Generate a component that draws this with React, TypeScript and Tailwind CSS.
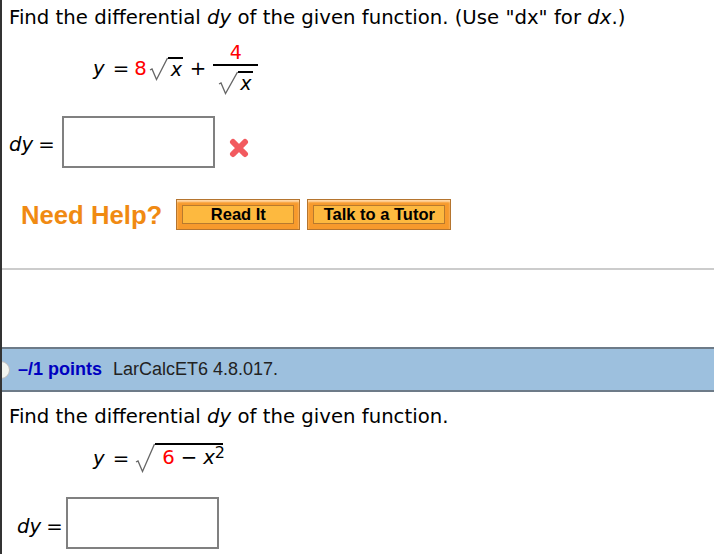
import React from 'react';

const RootSign = ({ width, height }: { width: number; height: number }) => (
  <svg width={width} height={height} viewBox={`0 0 ${width} ${height}`} className="block shrink-0" fill="none">
    <path d={`M1 ${height - 11} L3 ${height - 12} L7.5 ${height - 1.5} L${width - 0.5} 1`} stroke="#666" strokeWidth="1.3" />
  </svg>
);

const Radical = ({ children, signWidth, signHeight }: { children: React.ReactNode; signWidth: number; signHeight: number }) => (
  <span className="flex items-end">
    <RootSign width={signWidth} height={signHeight} />
    <span className="block border-t-2 border-black leading-none">{children}</span>
  </span>
);

const AnswerBox = ({ className }: { className: string }) => (
  <div className={`h-[52px] border-2 border-[#808080] bg-white ${className}`} />
);

const HelpButton = ({ label, className }: { label: string; className: string }) => (
  <button className={`flex h-[31px] items-center justify-center border border-[#b5752f] bg-[#f79a2c] p-[5px] shadow-[inset_0_2px_2px_#ffd9a8] ${className}`}>
    <span className="flex h-full w-full items-center justify-center border border-[#b87a2e] bg-[#fdb93f] text-[16.5px] font-bold text-black">{label}</span>
  </button>
);

export default function App() {
  return (
    <div className="h-[554px] w-[714px] overflow-hidden border-l-2 border-[#333] bg-white font-['DejaVu_Sans',sans-serif] text-[19.7px] text-black">
      <section className="h-[270px] border-b-2 border-[#ccc]">
        <p className="pl-[7px] pt-[5px] leading-[26px] whitespace-nowrap">
          Find the differential <i>dy</i> of the given function. (Use "dx" for <i>dx</i>.)
        </p>

        <div className="ml-[91px] mt-[11px] flex h-[58px] items-start">
          <i className="mt-[14px] leading-[26px]">y</i>
          <span className="ml-[8px] mt-[14px] leading-[26px]">=</span>
          <span className="ml-[5px] mt-[14px] leading-[26px] text-[#f00]">8</span>
          <div className="ml-[2px] mt-[15px]">
            <Radical signWidth={19} signHeight={24}>
              <i className="block h-[22px] w-[15px] pl-[3px] text-[19px] leading-[21px]">x</i>
            </Radical>
          </div>
          <span className="ml-[7px] mt-[14px] leading-[26px]">+</span>
          <div className="ml-[7px] flex w-[45px] flex-col items-center">
            <span className="h-[20px] text-[19px] leading-[20px] text-[#f00]">4</span>
            <div className="mt-[2px] h-[2px] w-[45px] bg-black" />
            <div className="mt-[5px]">
              <Radical signWidth={20} signHeight={24}>
                <i className="block h-[22px] w-[15px] pl-[2px] text-[19px] leading-[21px]">x</i>
              </Radical>
            </div>
          </div>
        </div>

        <div className="ml-[7px] mt-[16px] flex items-center">
          <i className="mt-[5px] leading-[26px]">dy</i>
          <span className="ml-[5px] mt-[5px] leading-[26px]">=</span>
          <AnswerBox className="ml-[7px] w-[153px]" />
          <svg width="20" height="20" viewBox="0 0 20 20" className="ml-[14px] mt-[12px]">
            <path d="M4 4 L16 16 M16 4 L4 16" stroke="#f25a5f" strokeWidth="6" strokeLinecap="round" />
          </svg>
        </div>

        <div className="ml-[19px] mt-[31px] flex items-center font-['Liberation_Sans',sans-serif]">
          <span className="text-[25.7px] leading-[30px] font-bold text-[#f08a12]">Need Help?</span>
          <HelpButton label="Read It" className="ml-[14px] w-[124px]" />
          <HelpButton label="Talk to a Tutor" className="ml-[7px] w-[144px]" />
        </div>
      </section>

      <div className="mt-[77px] flex h-[45px] items-center border-y-2 border-[#6d7b88] bg-[#9dc0de] font-['Liberation_Sans',sans-serif] text-[18px]">
        <span className="ml-[-10px] h-[18px] w-[18px] shrink-0 rounded-full border border-[#bbb] bg-[#f2f5f0]" />
        <b className="ml-[8px] text-[#0000c0]">–/1 points</b>
        <span className="ml-[11px] text-[#222]">LarCalcET6 4.8.017.</span>
      </div>

      <p className="pl-[7px] pt-[12px] leading-[26px] whitespace-nowrap">
        Find the differential <i>dy</i> of the given function.
      </p>

      <div className="ml-[91px] mt-[13px] flex h-[40px] items-start">
        <i className="mt-[3px] leading-[26px]">y</i>
        <span className="ml-[8px] mt-[3px] leading-[26px]">=</span>
        <div className="ml-[6px]">
          <Radical signWidth={20} signHeight={30}>
            <span className="flex h-[28px] w-[68px] items-start pl-[7px] pt-[1px] leading-[24px]">
              <span className="text-[#f00]">6</span>
              <span className="ml-[6px]">−</span>
              <i className="ml-[6px]">x</i>
              <span className="mt-[-5px] text-[16px]">2</span>
            </span>
          </Radical>
        </div>
      </div>

      <div className="ml-[15px] mt-[14px] flex items-center">
        <i className="mt-[7px] leading-[26px]">dy</i>
        <span className="ml-[5px] mt-[7px] leading-[26px]">=</span>
        <AnswerBox className="ml-[3px] w-[153px]" />
      </div>
    </div>
  );
}
